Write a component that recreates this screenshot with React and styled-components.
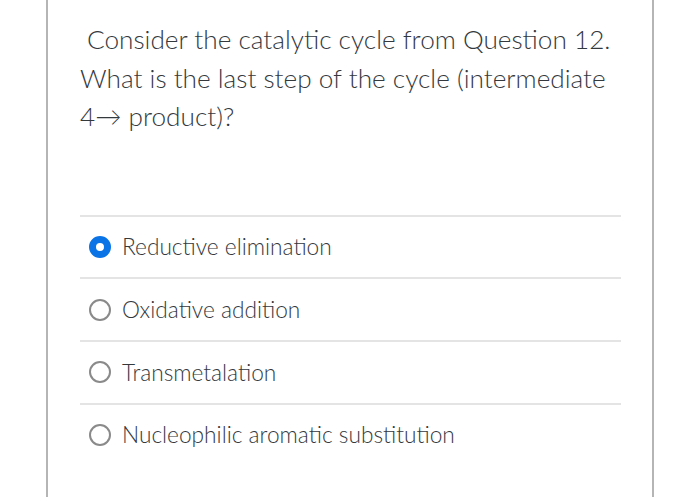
import React from "react";
import styled, { createGlobalStyle } from "styled-components";

const Global = createGlobalStyle`
  html, body { margin: 0; padding: 0; background: #fff; }
  body { font-family: Lato, "Open Sans", sans-serif; color: #2d3b45; }
`;

const Page = styled.div`
  height: 497px;
  overflow: hidden;
  padding-left: 46px;
`;

const Panel = styled.div`
  width: 608px;
  height: 100%;
  box-sizing: border-box;
  border-left: 2px solid #b5b5b5;
  border-right: 2px solid #b5b5b5;
  padding: 20px 31px 0 32px;
`;

const Question = styled.p`
  margin: 0;
  font-size: 26.2px;
  line-height: 38.5px;
  font-weight: 300;
  color: #34393e;
`;

const Indent = styled.span`
  display: inline-block;
  width: 7px;
`;

const Options = styled.div`
  margin-top: 79px;
  display: flex;
  flex-direction: column;
`;

const Option = styled.label`
  display: flex;
  align-items: center;
  gap: 11px;
  height: 60.7px;
  padding-left: 9px;
  border-top: 2px solid #e4e4e4;
  font-size: 22.7px;
  font-weight: 300;
  color: #34393e;
`;

const Radio = styled.span`
  width: 22px;
  height: 22px;
  box-sizing: border-box;
  border-radius: 50%;
  flex-shrink: 0;
  border: ${(p) => (p.$checked ? "7px solid #0a74e6" : "2px solid #8a8a8a")};
  background: #fff;
`;

const options = [
  { text: "Reductive elimination", checked: true },
  { text: "Oxidative addition" },
  { text: "Transmetalation" },
  { text: "Nucleophilic aromatic substitution" },
];

export default function App() {
  return (
    <>
      <Global />
      <Page>
        <Panel>
          <Question>
            <Indent />Consider the catalytic cycle from Question 12.
            <br />
            What is the last step of the cycle (intermediate
            <br />
            4→ product)?
          </Question>
          <Options>
            {options.map((o) => (
              <Option key={o.text}>
                <Radio $checked={o.checked} />
                {o.text}
              </Option>
            ))}
          </Options>
        </Panel>
      </Page>
    </>
  );
}
